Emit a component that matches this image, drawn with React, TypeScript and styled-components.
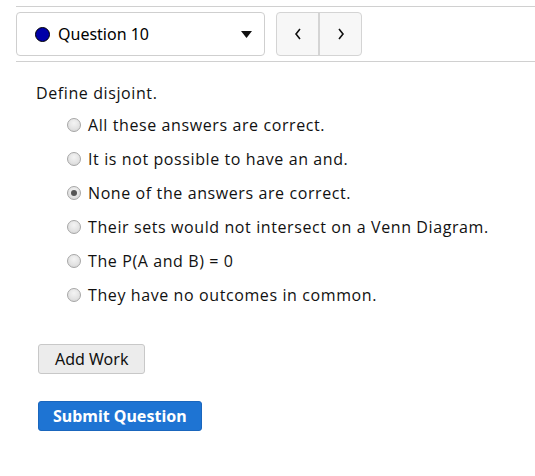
import React from "react";
import styled, { createGlobalStyle } from "styled-components";

const Global = createGlobalStyle`
  html, body { margin: 0; padding: 0; background: #fff; }
  body { font-family: "Noto Sans", "Open Sans", sans-serif; color: #000; }
`;

const Page = styled.div`
  padding-top: 6px;
`;

const Header = styled.div`
  margin-left: 16px;
  border-top: 1px solid #d0d0d0;
  border-bottom: 1px solid #d0d0d0;
  padding: 5px 0;
  display: flex;
  align-items: center;
  gap: 11px;
`;

const Select = styled.div`
  box-sizing: border-box;
  width: 249px;
  height: 44px;
  border: 1px solid #cfcfcf;
  border-radius: 4px;
  background: #fff;
  display: flex;
  align-items: center;
  padding: 0 10px 0 18px;
  font-size: 16px;
`;

const Dot = styled.span`
  width: 13px;
  height: 13px;
  border-radius: 50%;
  background: #0000a8;
  border: 1px solid #000;
  margin-right: 8px;
  flex: none;
`;

const SelectLabel = styled.span`
  flex: 1;
`;

const Caret = styled.svg`
  width: 11px;
  height: 7px;
  margin-right: 2px;
`;

const Nav = styled.div`
  display: flex;
  box-sizing: border-box;
  height: 44px;
  border: 1px solid #d4d4d4;
  border-radius: 4px;
  background: #f7f7f7;
  overflow: hidden;
`;

const NavButton = styled.div<{ $divider?: boolean }>`
  width: 41px;
  display: flex;
  align-items: center;
  justify-content: center;
  border-left: ${(p) => (p.$divider ? "2px solid #d4d4d4" : "none")};
`;

const Body = styled.div`
  padding: 20px 0 0 36px;
`;

const Prompt = styled.div`
  font-family: "Open Sans", sans-serif;
  font-size: 16px;
  letter-spacing: 0.6px;
  line-height: 22px;
  color: #111;
  margin-bottom: 4px;
`;

const Choices = styled.div`
  display: flex;
  flex-direction: column;
  margin-left: 31px;
`;

const Choice = styled.label`
  display: flex;
  align-items: center;
  height: 34px;
  gap: 7px;
  font-family: "Open Sans", sans-serif;
  font-size: 16px;
  letter-spacing: 0.6px;
  color: #111;
`;

const Radio = styled.span<{ $checked?: boolean }>`
  box-sizing: border-box;
  width: 14px;
  height: 14px;
  border-radius: 50%;
  border: 1px solid #a6a6a6;
  background: radial-gradient(circle at 50% 35%, #f4f4f4 0%, #e2e2e2 60%, #cfcfcf 100%);
  display: flex;
  align-items: center;
  justify-content: center;
  flex: none;
  &::after {
    content: "";
    width: 6px;
    height: 6px;
    border-radius: 50%;
    background: #555;
    display: ${(p) => (p.$checked ? "block" : "none")};
  }
`;

const Actions = styled.div`
  display: flex;
  flex-direction: column;
  align-items: flex-start;
  gap: 27px;
  margin: 32px 0 0 2px;
`;

const Button = styled.button<{ $primary?: boolean }>`
  box-sizing: border-box;
  height: 30px;
  padding: 0 ${(p) => (p.$primary ? "14px" : "16px")};
  border-radius: 3px;
  border: 1px solid ${(p) => (p.$primary ? "#1a66bd" : "#c8c8c8")};
  background: ${(p) => (p.$primary ? "#1e74d3" : "#ececec")};
  color: ${(p) => (p.$primary ? "#fff" : "#111")};
  font-family: "Noto Sans", sans-serif;
  font-size: 16px;
  font-weight: ${(p) => (p.$primary ? 700 : 400)};
  cursor: pointer;
`;

const choices = [
  "All these answers are correct.",
  "It is not possible to have an and.",
  "None of the answers are correct.",
  "Their sets would not intersect on a Venn Diagram.",
  "The P(A and B) = 0",
  "They have no outcomes in common.",
];

export default function App() {
  return (
    <Page>
      <Global />
      <Header>
        <Select>
          <Dot />
          <SelectLabel>Question 10</SelectLabel>
          <Caret viewBox="0 0 11 7">
            <path d="M0 0 H11 L5.5 7 Z" fill="#111" />
          </Caret>
        </Select>
        <Nav>
          <NavButton>
            <svg width="8" height="12" viewBox="0 0 8 12">
              <path d="M6 1 L2 6 L6 11" fill="none" stroke="#111" strokeWidth="1.6" />
            </svg>
          </NavButton>
          <NavButton $divider>
            <svg width="8" height="12" viewBox="0 0 8 12">
              <path d="M2 1 L6 6 L2 11" fill="none" stroke="#111" strokeWidth="1.6" />
            </svg>
          </NavButton>
        </Nav>
      </Header>
      <Body>
        <Prompt>Define disjoint.</Prompt>
        <Choices>
          {choices.map((c, i) => (
            <Choice key={i}>
              <Radio $checked={i === 2} />
              <span>{c}</span>
            </Choice>
          ))}
        </Choices>
        <Actions>
          <Button>Add Work</Button>
          <Button $primary>Submit Question</Button>
        </Actions>
      </Body>
    </Page>
  );
}
